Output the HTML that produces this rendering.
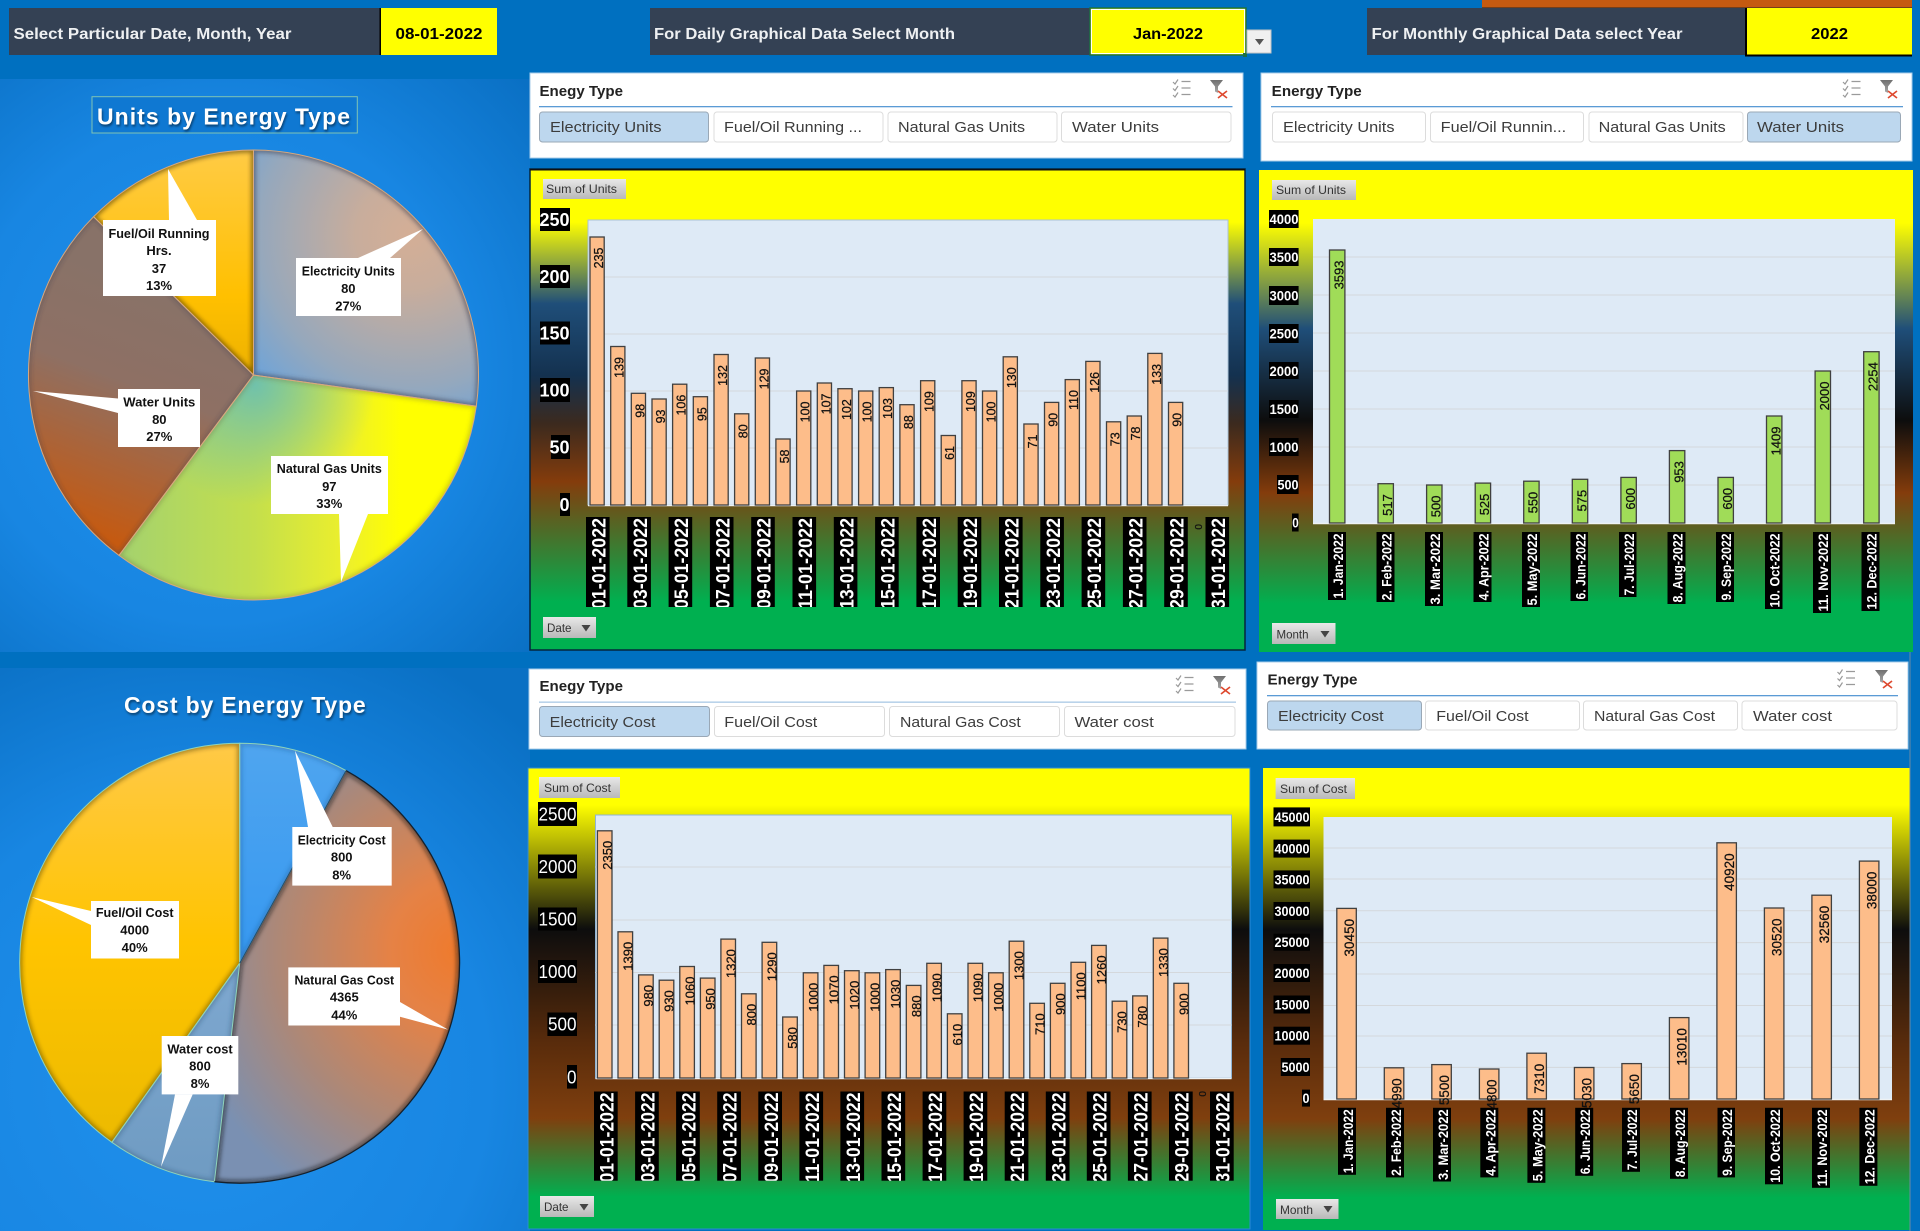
<!DOCTYPE html>
<html lang="en">
<head>
<meta charset="utf-8">
<title>Energy Dashboard</title>
<style>
html,body{margin:0;padding:0;background:#0070c0;width:1920px;height:1231px;overflow:hidden}
svg{display:block;font-family:"Liberation Sans",sans-serif}
.hd{font-size:15.5px;font-weight:bold;fill:#eef0f2}
.hy{font-size:16px;font-weight:bold;fill:#000;text-anchor:middle}
.st{font-size:15px;font-weight:bold;fill:#222}
.sb{font-size:15px;fill:#3c3c3c}
.pl{font-size:13px;font-weight:bold;fill:#111;text-anchor:middle}
.tt{font-size:23px;font-weight:bold;fill:#fff;filter:drop-shadow(1px 2px 1px rgba(0,0,0,.45))}
.b{stroke:#404040;stroke-width:1.3}
.o{fill:#fdbd8a}
.g{fill:#a0dc58}
.v{font-size:12.5px;fill:#111;stroke:#111;stroke-width:.25;text-anchor:end}
.w{font-size:13px;fill:#111;stroke:#111;stroke-width:.25;text-anchor:end}
.w2{font-size:13.5px;fill:#111;stroke:#111;stroke-width:.25;text-anchor:end}
.xd{font-size:19px;font-weight:bold;fill:#fff;text-anchor:end}
.xm{font-size:14px;font-weight:bold;fill:#fff;text-anchor:end}
.y1{font-size:18px;font-weight:bold;fill:#fff;text-anchor:end}
.y3{font-size:18px;fill:#fff;text-anchor:end}
.y2{font-size:14px;font-weight:bold;fill:#fff;text-anchor:end}
.bt{font-size:12px;fill:#333}
.gl{stroke:#d4d8dc;stroke-width:1}
</style>
</head>
<body>
<svg xmlns="http://www.w3.org/2000/svg" width="1920" height="1231" viewBox="0 0 1920 1231">
<defs>
<radialGradient id="pn1" gradientUnits="userSpaceOnUse" cx="220" cy="370" r="420"><stop offset="0" stop-color="#2090ec"/><stop offset=".6" stop-color="#1886e2"/><stop offset="1" stop-color="#0a70c4"/></radialGradient>
<radialGradient id="pn2" gradientUnits="userSpaceOnUse" cx="200" cy="1080" r="480"><stop offset="0" stop-color="#2090ec"/><stop offset=".6" stop-color="#1886e2"/><stop offset="1" stop-color="#0a70c4"/></radialGradient>
<linearGradient id="c1" x1="0" y1="0" x2="0" y2="1"><stop offset="0" stop-color="#ff0"/><stop offset=".11" stop-color="#ff0"/><stop offset=".28" stop-color="#1f4e79"/><stop offset=".43" stop-color="#14314f"/><stop offset=".53" stop-color="#3c2a1e"/><stop offset=".65" stop-color="#843c0c"/><stop offset=".9" stop-color="#00b050"/><stop offset="1" stop-color="#00b050"/></linearGradient>
<linearGradient id="c2" x1="0" y1="0" x2="0" y2="1"><stop offset="0" stop-color="#ff0"/><stop offset=".11" stop-color="#ff0"/><stop offset=".33" stop-color="#1f4e79"/><stop offset=".52" stop-color="#0d0d0d"/><stop offset=".67" stop-color="#843c0c"/><stop offset=".9" stop-color="#00b050"/><stop offset="1" stop-color="#00b050"/></linearGradient>
<linearGradient id="c3" x1="0" y1="0" x2="0" y2="1"><stop offset="0" stop-color="#ff0"/><stop offset=".08" stop-color="#ff0"/><stop offset=".35" stop-color="#0d0d0d"/><stop offset=".6" stop-color="#5a2c0c"/><stop offset=".76" stop-color="#7f3f0e"/><stop offset=".93" stop-color="#00b050"/><stop offset="1" stop-color="#00b050"/></linearGradient>
<linearGradient id="btn" x1="0" y1="0" x2="0" y2="1"><stop offset="0" stop-color="#e8e8e8"/><stop offset="1" stop-color="#b8b8b8"/></linearGradient>
<linearGradient id="fun" x1="0" y1="0" x2="0" y2="1"><stop offset="0" stop-color="#707070"/><stop offset="1" stop-color="#a8a8a8"/></linearGradient>

<path id="a1" d="M253.5 375L253.5 150A225 225 0 0 1 476.3 406.2Z"/>
<path id="a2" d="M253.5 375L476.3 406.2A225 225 0 0 1 119 555.4Z"/>
<path id="a3" d="M253.5 375L119 555.4A225 225 0 0 1 93.6 216.7Z"/>
<path id="a4" d="M253.5 375L93.6 216.7A225 225 0 0 1 253.5 150Z"/>
<path id="b1" d="M239.7 963.2L239.7 743.2A220 220 0 0 1 346 770.6Z"/>
<path id="b2" d="M239.7 963.2L346 770.6A220 220 0 0 1 214.4 1181.7Z"/>
<path id="b3" d="M239.7 963.2L214.4 1181.7A220 220 0 0 1 111.9 1142.3Z"/>
<path id="b4" d="M239.7 963.2L111.9 1142.3A220 220 0 0 1 239.7 743.2Z"/>
<clipPath id="ca1"><use href="#a1"/></clipPath>
<clipPath id="ca2"><use href="#a2"/></clipPath>
<clipPath id="ca3"><use href="#a3"/></clipPath>
<clipPath id="ca4"><use href="#a4"/></clipPath>
<clipPath id="cb1"><use href="#b1"/></clipPath>
<clipPath id="cb2"><use href="#b2"/></clipPath>
<clipPath id="cb3"><use href="#b3"/></clipPath>
<clipPath id="cb4"><use href="#b4"/></clipPath>
<filter id="bl" x="-20%" y="-20%" width="140%" height="140%"><feGaussianBlur stdDeviation="2"/></filter>

<radialGradient id="fa1" gradientUnits="userSpaceOnUse" cx="410" cy="235" r="215"><stop offset="0" stop-color="#d4ae96"/><stop offset=".25" stop-color="#c8ad9c"/><stop offset=".7" stop-color="#96a8bc"/><stop offset="1" stop-color="#69a3dc"/></radialGradient>
<linearGradient id="fa2" gradientUnits="userSpaceOnUse" x1="120" y1="0" x2="400" y2="0"><stop offset="0" stop-color="#a4d26e"/><stop offset=".48" stop-color="#c4df4c"/><stop offset=".82" stop-color="#eef02a"/><stop offset="1" stop-color="#ff0"/></linearGradient>
<radialGradient id="fa2b" gradientUnits="userSpaceOnUse" cx="255" cy="385" r="120"><stop offset="0" stop-color="#6cc0b0" stop-opacity=".95"/><stop offset="1" stop-color="#6cc0b0" stop-opacity="0"/></radialGradient>
<linearGradient id="fa3" gradientUnits="userSpaceOnUse" x1="200" y1="300" x2="110" y2="540"><stop offset="0" stop-color="#887268"/><stop offset=".4" stop-color="#8e7064"/><stop offset=".7" stop-color="#aa643a"/><stop offset="1" stop-color="#c55a11"/></linearGradient>
<linearGradient id="fa4" gradientUnits="userSpaceOnUse" x1="0" y1="150" x2="0" y2="375"><stop offset="0" stop-color="#ffcb45"/><stop offset=".65" stop-color="#ffc000"/><stop offset="1" stop-color="#edb100"/></linearGradient>
<linearGradient id="fb1" gradientUnits="userSpaceOnUse" x1="0" y1="743" x2="0" y2="963"><stop offset="0" stop-color="#4fa5ef"/><stop offset="1" stop-color="#3698f0"/></linearGradient>
<radialGradient id="fb2" gradientUnits="userSpaceOnUse" cx="460" cy="950" r="285"><stop offset="0" stop-color="#ef7a2c"/><stop offset=".25" stop-color="#e58246"/><stop offset=".65" stop-color="#ac8878"/><stop offset="1" stop-color="#7a90b2"/></radialGradient>
<linearGradient id="fb3" gradientUnits="userSpaceOnUse" x1="0" y1="963" x2="0" y2="1180"><stop offset="0" stop-color="#7ea8d0"/><stop offset="1" stop-color="#6f9bc2"/></linearGradient>
<linearGradient id="fb4" gradientUnits="userSpaceOnUse" x1="0" y1="743" x2="0" y2="1142"><stop offset="0" stop-color="#ffc947"/><stop offset=".5" stop-color="#ffc400"/><stop offset="1" stop-color="#ecba00"/></linearGradient>

<g id="ms" fill="none" stroke="#9a9a9a" stroke-width="1.2"><path d="M0 3l2 2 3-4.500M0 9.500l2 2 3-4.500M0 16l2 2 3-4.500"/><path d="M8.500 2.500h9M8.500 9h9M8.500 15.500h9"/></g>
<g id="fx"><path d="M0 0h13L8 6.500V13L5 11.500V6.500z" fill="url(#fun)"/><path d="M8 11l9 7M17 11l-9 7" stroke="#de4a30" stroke-width="1.700" fill="none"/></g>
<clipPath id="xc1"><rect x="570" y="517" width="680" height="90"/></clipPath>
<clipPath id="xc3"><rect x="570" y="1091.5" width="680" height="89.2"/></clipPath>
</defs>

<rect width="1920" height="1231" fill="#0070c0"/>
<!-- panels -->
<rect x="0" y="79" width="530" height="573" fill="url(#pn1)"/>
<rect x="0" y="668" width="530" height="563" fill="url(#pn2)"/>

<!-- header -->
<rect x="1482" y="0" width="430" height="8" fill="#c55a11"/>
<rect x="1482" y="7.5" width="430" height="1" fill="#222"/>
<rect x="9" y="8" width="371" height="47" fill="#344154"/>
<rect x="380" y="8" width="117" height="47" fill="#ff0"/>
<rect x="379.5" y="8" width="1.5" height="47" fill="#000"/>
<text class="hd" x="13.5" y="39" textLength="278" lengthAdjust="spacingAndGlyphs">Select Particular Date, Month, Year</text>
<text class="hy" x="439" y="39" textLength="87" lengthAdjust="spacingAndGlyphs">08-01-2022</text>
<rect x="650" y="8" width="440" height="47" fill="#344154"/>
<rect x="1090" y="8" width="156" height="47" fill="#ff0" stroke="#1d7044" stroke-width="1.5"/>
<rect x="1091.5" y="9.5" width="153" height="44" fill="#ff0" stroke="#fff" stroke-width="1"/>
<rect x="1243" y="53" width="4" height="4" fill="#1d7044"/>
<text class="hd" x="654" y="39" textLength="301" lengthAdjust="spacingAndGlyphs">For Daily Graphical Data Select Month</text>
<text class="hy" x="1168" y="39" textLength="70" lengthAdjust="spacingAndGlyphs">Jan-2022</text>
<rect x="1247" y="30" width="24" height="23" fill="#f0f0f0" stroke="#c4c4c4" stroke-width="1"/>
<path d="M1255 39h9l-4.500 6z" fill="#555"/>
<rect x="1367" y="8" width="379" height="47" fill="#344154"/>
<rect x="1746" y="8" width="166" height="47" fill="#ff0"/>
<path d="M1746 8v47.500h166" stroke="#000" stroke-width="2" fill="none"/>
<text class="hd" x="1371.5" y="39" textLength="311" lengthAdjust="spacingAndGlyphs">For Monthly Graphical Data select Year</text>
<text class="hy" x="1829.500" y="39" textLength="37" lengthAdjust="spacingAndGlyphs">2022</text>

<!-- pie 1 -->
<rect x="92" y="96.7" width="265.300" height="36.300" fill="#0f78d2" stroke="#7fc4b4" stroke-width="1"/>
<text class="tt" x="97" y="124.5" textLength="253" lengthAdjust="spacing">Units by Energy Type</text>
<use href="#a1" fill="url(#fa1)"/>
<g clip-path="url(#ca1)"><use href="#a1" fill="none" stroke="#3a3a4a" stroke-opacity=".55" stroke-width="5" filter="url(#bl)"/></g>
<use href="#a2" fill="url(#fa2)"/><use href="#a2" fill="url(#fa2b)"/>
<g clip-path="url(#ca2)"><use href="#a2" fill="none" stroke="#66663a" stroke-opacity=".3" stroke-width="5" filter="url(#bl)"/></g>
<use href="#a3" fill="url(#fa3)"/>
<g clip-path="url(#ca3)"><use href="#a3" fill="none" stroke="#3a3a4a" stroke-opacity=".3" stroke-width="5" filter="url(#bl)"/></g>
<use href="#a4" fill="url(#fa4)"/>
<g clip-path="url(#ca4)"><use href="#a4" fill="none" stroke="#3a2a00" stroke-opacity=".55" stroke-width="5" filter="url(#bl)"/></g>
<g fill="none" stroke="#d8a87e" stroke-width="1"><use href="#a1"/><use href="#a2"/><use href="#a3"/><use href="#a4"/></g>

<g fill="#fff">
<path d="M168 169L169 220H197Z"/><rect x="103" y="220" width="113" height="76"/>
<path d="M423 229L358 258H390Z"/><rect x="296" y="258" width="105" height="58"/>
<path d="M33 391L118 398.500V413Z"/><rect x="118" y="389" width="82" height="58"/>
<path d="M341 582L339 514H368Z"/><rect x="271" y="456" width="117" height="58"/>
</g>
<text class="pl" x="159" y="238" textLength="101" lengthAdjust="spacingAndGlyphs">Fuel/Oil Running</text>
<text class="pl" x="159" y="255">Hrs.</text><text class="pl" x="159" y="273">37</text><text class="pl" x="159" y="290">13%</text>
<text class="pl" x="348.3" y="275.500" textLength="93" lengthAdjust="spacingAndGlyphs">Electricity Units</text>
<text class="pl" x="348.3" y="293">80</text><text class="pl" x="348.3" y="310.500">27%</text>
<text class="pl" x="159.3" y="406.5" textLength="72" lengthAdjust="spacingAndGlyphs">Water Units</text>
<text class="pl" x="159.3" y="424">80</text><text class="pl" x="159.3" y="441">27%</text>
<text class="pl" x="329.3" y="473" textLength="105" lengthAdjust="spacingAndGlyphs">Natural Gas Units</text>
<text class="pl" x="329.3" y="491">97</text><text class="pl" x="329.3" y="508">33%</text>

<!-- pie 2 -->
<text class="tt" x="124" y="713" textLength="241.700" lengthAdjust="spacing">Cost by Energy Type</text>
<use href="#b1" fill="url(#fb1)"/>
<g clip-path="url(#cb1)"><use href="#b1" fill="none" stroke="#1a4a80" stroke-opacity=".3" stroke-width="5" filter="url(#bl)"/></g>
<use href="#b2" fill="url(#fb2)"/>
<g clip-path="url(#cb2)"><use href="#b2" fill="none" stroke="#1a1a1a" stroke-opacity=".55" stroke-width="6" filter="url(#bl)"/></g>
<use href="#b3" fill="url(#fb3)"/>
<g clip-path="url(#cb3)"><use href="#b3" fill="none" stroke="#2a4a6a" stroke-opacity=".35" stroke-width="5" filter="url(#bl)"/></g>
<use href="#b4" fill="url(#fb4)"/>
<g clip-path="url(#cb4)"><use href="#b4" fill="none" stroke="#3a2a00" stroke-opacity=".45" stroke-width="5" filter="url(#bl)"/></g>
<g fill="none" stroke="#8fd4ba" stroke-width="1"><use href="#b1"/><use href="#b3"/><use href="#b4"/></g>
<path d="M346 770.600A220 220 0 0 1 214.400 1181.700" fill="none" stroke="#14202c" stroke-width="1.300"/>
<path d="M346 770.600L239.700 963.200" fill="none" stroke="#1c4a70" stroke-width="1"/>

<g fill="#fff">
<path d="M295 750.700L308 827H332.700Z"/><rect x="292.300" y="827" width="99.400" height="58.600"/>
<path d="M31.700 897L91 911V925Z"/><rect x="91" y="901" width="88" height="57.500"/>
<path d="M448 1029.600L400 1002V1016.700Z"/><rect x="288.300" y="967.400" width="111.700" height="58.100"/>
<path d="M161 1166.700L175 1094.400H192.700Z"/><rect x="161.700" y="1036" width="76.600" height="58.400"/>
</g>
<text class="pl" x="341.700" y="844.500" textLength="88" lengthAdjust="spacingAndGlyphs">Electricity Cost</text>
<text class="pl" x="341.700" y="861.500">800</text><text class="pl" x="341.700" y="879.500">8%</text>
<text class="pl" x="134.700" y="917" textLength="77.700" lengthAdjust="spacingAndGlyphs">Fuel/Oil Cost</text>
<text class="pl" x="134.700" y="934.500">4000</text><text class="pl" x="134.700" y="952">40%</text>
<text class="pl" x="344.300" y="984.500" textLength="99.700" lengthAdjust="spacingAndGlyphs">Natural Gas Cost</text>
<text class="pl" x="344.300" y="1001.500">4365</text><text class="pl" x="344.300" y="1019.500">44%</text>
<text class="pl" x="200" y="1053.500" textLength="65.300" lengthAdjust="spacingAndGlyphs">Water cost</text>
<text class="pl" x="200" y="1070.500">800</text><text class="pl" x="200" y="1088">8%</text>

<!-- slicer 1 -->
<rect x="530" y="73" width="713" height="85" fill="#fff" stroke="#a9cdea" stroke-width="1"/>
<text class="st" x="539.5" y="96" textLength="83.500" lengthAdjust="spacingAndGlyphs">Enegy Type</text>
<rect x="539" y="106" width="693.500" height="1.300" fill="#5b9bd5"/>
<use href="#ms" x="1173" y="79"/><use href="#fx" x="1210" y="80"/>
<rect x="539.500" y="112" width="169" height="30" rx="3" fill="#bdd7ee" stroke="#9aa8b6"/>
<rect x="714" y="112" width="169" height="30" rx="3" fill="#fff" stroke="#dcdcdc"/>
<rect x="888" y="112" width="169" height="30" rx="3" fill="#fff" stroke="#dcdcdc"/>
<rect x="1061.500" y="112" width="169.500" height="30" rx="3" fill="#fff" stroke="#dcdcdc"/>
<text class="sb" x="550" y="132" textLength="111.500" lengthAdjust="spacingAndGlyphs">Electricity Units</text>
<text class="sb" x="724" y="132" textLength="138" lengthAdjust="spacingAndGlyphs">Fuel/Oil Running ...</text>
<text class="sb" x="898" y="132" textLength="127" lengthAdjust="spacingAndGlyphs">Natural Gas Units</text>
<text class="sb" x="1072" y="132" textLength="87" lengthAdjust="spacingAndGlyphs">Water Units</text>

<!-- slicer 2 -->
<rect x="1261" y="73" width="651" height="88" fill="#fff" stroke="#a9cdea" stroke-width="1"/>
<text class="st" x="1271.700" y="96" textLength="90" lengthAdjust="spacingAndGlyphs">Energy Type</text>
<rect x="1271" y="106" width="632" height="1.300" fill="#5b9bd5"/>
<use href="#ms" x="1843" y="79"/><use href="#fx" x="1880" y="80"/>
<rect x="1272.500" y="112" width="153" height="30" rx="3" fill="#fff" stroke="#dcdcdc"/>
<rect x="1430.500" y="112" width="153" height="30" rx="3" fill="#fff" stroke="#dcdcdc"/>
<rect x="1589" y="112" width="154" height="30" rx="3" fill="#fff" stroke="#dcdcdc"/>
<rect x="1747.500" y="112" width="153" height="30" rx="3" fill="#bdd7ee" stroke="#9aa8b6"/>
<text class="sb" x="1283" y="132" textLength="111.500" lengthAdjust="spacingAndGlyphs">Electricity Units</text>
<text class="sb" x="1440.700" y="132" textLength="125.500" lengthAdjust="spacingAndGlyphs">Fuel/Oil Runnin...</text>
<text class="sb" x="1598.700" y="132" textLength="127" lengthAdjust="spacingAndGlyphs">Natural Gas Units</text>
<text class="sb" x="1757" y="132" textLength="87" lengthAdjust="spacingAndGlyphs">Water Units</text>

<!-- slicer 3 -->
<rect x="529" y="669" width="717" height="80" fill="#fff" stroke="#a9cdea" stroke-width="1"/>
<text class="st" x="539.500" y="691" textLength="83.500" lengthAdjust="spacingAndGlyphs">Enegy Type</text>
<rect x="539" y="701.500" width="697" height="1.300" fill="#a9c8e4"/>
<use href="#ms" x="1176" y="675"/><use href="#fx" x="1213" y="676"/>
<rect x="539.500" y="706.500" width="170" height="30" rx="3" fill="#bdd7ee" stroke="#9aa8b6"/>
<rect x="714.500" y="706.500" width="170" height="30" rx="3" fill="#fff" stroke="#dcdcdc"/>
<rect x="889.500" y="706.500" width="170" height="30" rx="3" fill="#fff" stroke="#dcdcdc"/>
<rect x="1064.500" y="706.500" width="170.500" height="30" rx="3" fill="#fff" stroke="#dcdcdc"/>
<text class="sb" x="549.700" y="727" textLength="105.700" lengthAdjust="spacingAndGlyphs">Electricity Cost</text>
<text class="sb" x="724.300" y="727" textLength="93" lengthAdjust="spacingAndGlyphs">Fuel/Oil Cost</text>
<text class="sb" x="900" y="727" textLength="120.800" lengthAdjust="spacingAndGlyphs">Natural Gas Cost</text>
<text class="sb" x="1074.500" y="727" textLength="79.300" lengthAdjust="spacingAndGlyphs">Water cost</text>

<!-- slicer 4 -->
<rect x="1257" y="662" width="651" height="87" fill="#fff" stroke="#a9cdea" stroke-width="1"/>
<text class="st" x="1267.500" y="684.500" textLength="90" lengthAdjust="spacingAndGlyphs">Energy Type</text>
<rect x="1267" y="695" width="631" height="1.300" fill="#5b9bd5"/>
<use href="#ms" x="1837.500" y="669"/><use href="#fx" x="1875" y="670"/>
<rect x="1267.500" y="701" width="154" height="29" rx="3" fill="#bdd7ee" stroke="#9aa8b6"/>
<rect x="1425.500" y="701" width="154" height="29" rx="3" fill="#fff" stroke="#dcdcdc"/>
<rect x="1583.500" y="701" width="154" height="29" rx="3" fill="#fff" stroke="#dcdcdc"/>
<rect x="1742" y="701" width="155" height="29" rx="3" fill="#fff" stroke="#dcdcdc"/>
<text class="sb" x="1278" y="721" textLength="105.600" lengthAdjust="spacingAndGlyphs">Electricity Cost</text>
<text class="sb" x="1436.300" y="721" textLength="92.300" lengthAdjust="spacingAndGlyphs">Fuel/Oil Cost</text>
<text class="sb" x="1594" y="721" textLength="121" lengthAdjust="spacingAndGlyphs">Natural Gas Cost</text>
<text class="sb" x="1753" y="721" textLength="79" lengthAdjust="spacingAndGlyphs">Water cost</text>

<!-- chart 1 -->
<rect x="530" y="169" width="715" height="481" fill="url(#c1)" stroke="#04253c" stroke-width="1.500"/>
<rect x="530" y="169" width="715" height="1.500" fill="#111"/>
<rect x="543" y="179" width="83" height="20" fill="url(#btn)"/>
<text class="bt" x="546" y="193" textLength="71" lengthAdjust="spacingAndGlyphs">Sum of Units</text>
<rect x="588" y="220" width="640" height="285" fill="#deeaf6" stroke="#a9c2d6" stroke-width="1"/>
<path class="gl" d="M588 277h640M588 334h640M588 391h640M588 448h640"/>
<path d="M588 505.500h640" stroke="#eef2f4" stroke-width="1.500"/>
<g class="b o">
<rect x="590" y="237" width="14.200" height="268"/><rect x="610.700" y="346.500" width="14.200" height="158.500"/><rect x="631.300" y="393.300" width="14.200" height="111.700"/><rect x="652" y="399" width="14.200" height="106"/><rect x="672.600" y="384.200" width="14.200" height="120.800"/><rect x="693.300" y="396.700" width="14.200" height="108.300"/><rect x="714" y="354.500" width="14.200" height="150.500"/><rect x="734.600" y="413.800" width="14.200" height="91.200"/><rect x="755.300" y="358" width="14.200" height="147"/><rect x="775.900" y="439" width="14.200" height="66"/><rect x="796.600" y="391" width="14.200" height="114"/><rect x="817.300" y="383" width="14.200" height="122"/><rect x="837.900" y="388.700" width="14.200" height="116.300"/><rect x="858.600" y="391" width="14.200" height="114"/><rect x="879.200" y="387.600" width="14.200" height="117.400"/><rect x="899.900" y="404.700" width="14.200" height="100.300"/><rect x="920.600" y="380.700" width="14.200" height="124.300"/><rect x="941.200" y="435.500" width="14.200" height="69.500"/><rect x="961.900" y="380.700" width="14.200" height="124.300"/><rect x="982.500" y="391" width="14.200" height="114"/><rect x="1003.200" y="356.800" width="14.200" height="148.200"/><rect x="1023.900" y="424" width="14.200" height="81"/><rect x="1044.500" y="402.400" width="14.200" height="102.600"/><rect x="1065.200" y="379.600" width="14.200" height="125.400"/><rect x="1085.800" y="361.400" width="14.200" height="143.600"/><rect x="1106.500" y="421.800" width="14.200" height="83.200"/><rect x="1127.200" y="416" width="14.200" height="89"/><rect x="1147.800" y="353.400" width="14.200" height="151.600"/><rect x="1168.500" y="402.400" width="14.200" height="102.600"/>
</g>
<g>
<text class="v" transform="translate(603,247.500) rotate(-90)">235</text><text class="v" transform="translate(623.700,357) rotate(-90)">139</text><text class="v" transform="translate(644.300,403.800) rotate(-90)">98</text><text class="v" transform="translate(665,409.500) rotate(-90)">93</text><text class="v" transform="translate(685.600,394.700) rotate(-90)">106</text><text class="v" transform="translate(706.300,407.200) rotate(-90)">95</text><text class="v" transform="translate(727,365) rotate(-90)">132</text><text class="v" transform="translate(747.600,424.300) rotate(-90)">80</text><text class="v" transform="translate(768.300,368.500) rotate(-90)">129</text><text class="v" transform="translate(788.900,449.500) rotate(-90)">58</text><text class="v" transform="translate(809.600,401.500) rotate(-90)">100</text><text class="v" transform="translate(830.300,393.500) rotate(-90)">107</text><text class="v" transform="translate(850.900,399.200) rotate(-90)">102</text><text class="v" transform="translate(871.600,401.500) rotate(-90)">100</text><text class="v" transform="translate(892.200,398.100) rotate(-90)">103</text><text class="v" transform="translate(912.900,415.200) rotate(-90)">88</text><text class="v" transform="translate(933.600,391.200) rotate(-90)">109</text><text class="v" transform="translate(954.200,446) rotate(-90)">61</text><text class="v" transform="translate(974.900,391.200) rotate(-90)">109</text><text class="v" transform="translate(995.500,401.500) rotate(-90)">100</text><text class="v" transform="translate(1016.200,367.300) rotate(-90)">130</text><text class="v" transform="translate(1036.900,434.500) rotate(-90)">71</text><text class="v" transform="translate(1057.500,412.900) rotate(-90)">90</text><text class="v" transform="translate(1078.200,390.100) rotate(-90)">110</text><text class="v" transform="translate(1098.800,371.900) rotate(-90)">126</text><text class="v" transform="translate(1119.500,432.300) rotate(-90)">73</text><text class="v" transform="translate(1140.200,426.500) rotate(-90)">78</text><text class="v" transform="translate(1160.800,363.900) rotate(-90)">133</text><text class="v" transform="translate(1181.500,412.900) rotate(-90)">90</text>
<text class="v" style="font-size:10px" transform="translate(1202,524) rotate(-90)">0</text>
<text class="v" style="font-size:10px" transform="translate(1222.500,519) rotate(-90)">0</text>
</g>
<!-- y labels 1 -->
<g fill="#000"><rect x="540" y="208" width="30" height="23"/><rect x="540" y="265" width="30" height="23"/><rect x="540" y="321.500" width="30" height="23"/><rect x="540" y="378" width="30" height="24"/><rect x="551" y="435" width="19" height="24"/><rect x="560" y="493" width="10" height="23"/></g>
<text class="y1" x="569.500" y="226">250</text><text class="y1" x="569.500" y="283">200</text><text class="y1" x="569.500" y="339.500">150</text><text class="y1" x="569.500" y="396.500">100</text><text class="y1" x="569.500" y="453.500">50</text><text class="y1" x="569.500" y="511">0</text>
<!-- x labels 1 -->
<g fill="#000"><rect x="586" y="517" width="23.600" height="90"/><rect x="627.300" y="517" width="23.600" height="90"/><rect x="668.600" y="517" width="23.600" height="90"/><rect x="709.900" y="517" width="23.600" height="90"/><rect x="751.200" y="517" width="23.600" height="90"/><rect x="792.500" y="517" width="23.600" height="90"/><rect x="833.800" y="517" width="23.600" height="90"/><rect x="875.100" y="517" width="23.600" height="90"/><rect x="916.400" y="517" width="23.600" height="90"/><rect x="957.700" y="517" width="23.600" height="90"/><rect x="999" y="517" width="23.600" height="90"/><rect x="1040.300" y="517" width="23.600" height="90"/><rect x="1081.600" y="517" width="23.600" height="90"/><rect x="1122.900" y="517" width="23.600" height="90"/><rect x="1164.200" y="517" width="23.600" height="90"/><rect x="1205.500" y="517" width="23.600" height="90"/></g>
<g clip-path="url(#xc1)">
<text class="xd" transform="translate(605.500,518) rotate(-90)" textLength="91" lengthAdjust="spacingAndGlyphs">01-01-2022</text>
<text class="xd" transform="translate(646.800,518) rotate(-90)" textLength="91" lengthAdjust="spacingAndGlyphs">03-01-2022</text>
<text class="xd" transform="translate(688.100,518) rotate(-90)" textLength="91" lengthAdjust="spacingAndGlyphs">05-01-2022</text>
<text class="xd" transform="translate(729.400,518) rotate(-90)" textLength="91" lengthAdjust="spacingAndGlyphs">07-01-2022</text>
<text class="xd" transform="translate(770.700,518) rotate(-90)" textLength="91" lengthAdjust="spacingAndGlyphs">09-01-2022</text>
<text class="xd" transform="translate(812,518) rotate(-90)" textLength="91" lengthAdjust="spacingAndGlyphs">11-01-2022</text>
<text class="xd" transform="translate(853.300,518) rotate(-90)" textLength="91" lengthAdjust="spacingAndGlyphs">13-01-2022</text>
<text class="xd" transform="translate(894.600,518) rotate(-90)" textLength="91" lengthAdjust="spacingAndGlyphs">15-01-2022</text>
<text class="xd" transform="translate(935.900,518) rotate(-90)" textLength="91" lengthAdjust="spacingAndGlyphs">17-01-2022</text>
<text class="xd" transform="translate(977.200,518) rotate(-90)" textLength="91" lengthAdjust="spacingAndGlyphs">19-01-2022</text>
<text class="xd" transform="translate(1018.500,518) rotate(-90)" textLength="91" lengthAdjust="spacingAndGlyphs">21-01-2022</text>
<text class="xd" transform="translate(1059.800,518) rotate(-90)" textLength="91" lengthAdjust="spacingAndGlyphs">23-01-2022</text>
<text class="xd" transform="translate(1101.100,518) rotate(-90)" textLength="91" lengthAdjust="spacingAndGlyphs">25-01-2022</text>
<text class="xd" transform="translate(1142.400,518) rotate(-90)" textLength="91" lengthAdjust="spacingAndGlyphs">27-01-2022</text>
<text class="xd" transform="translate(1183.700,518) rotate(-90)" textLength="91" lengthAdjust="spacingAndGlyphs">29-01-2022</text>
<text class="xd" transform="translate(1225,518) rotate(-90)" textLength="91" lengthAdjust="spacingAndGlyphs">31-01-2022</text>
</g>
<rect x="543" y="617" width="53" height="21" fill="url(#btn)"/>
<text class="bt" x="547" y="632" textLength="24.500" lengthAdjust="spacingAndGlyphs">Date</text>
<path d="M581.500 625h9l-4.500 6.500z" fill="#444"/>

<!-- chart 2 -->
<rect x="1259" y="170" width="654" height="482" fill="url(#c2)"/>
<rect x="1272" y="180" width="84" height="20" fill="url(#btn)"/>
<text class="bt" x="1276" y="194" textLength="70" lengthAdjust="spacingAndGlyphs">Sum of Units</text>
<rect x="1313" y="219" width="582" height="304" fill="#deeaf6"/>
<path class="gl" d="M1313 257h582M1313 295h582M1313 333h582M1313 371h582M1313 409h582M1313 447h582M1313 485h582"/>
<path d="M1313 523.500h582" stroke="#eef2f4" stroke-width="1.500"/>
<g class="b g">
<rect x="1329.500" y="250" width="15.400" height="273"/><rect x="1378" y="483.700" width="15.400" height="39.300"/><rect x="1426.600" y="485" width="15.400" height="38"/><rect x="1475.200" y="483.100" width="15.400" height="39.900"/><rect x="1523.700" y="481.200" width="15.400" height="41.800"/><rect x="1572.300" y="479.300" width="15.400" height="43.700"/><rect x="1620.900" y="477.400" width="15.400" height="45.600"/><rect x="1669.400" y="450.600" width="15.400" height="72.400"/><rect x="1718" y="477.400" width="15.400" height="45.600"/><rect x="1766.500" y="416" width="15.400" height="107"/><rect x="1815.100" y="371" width="15.400" height="152"/><rect x="1863.700" y="351.700" width="15.400" height="171.300"/>
</g>
<text class="w" transform="translate(1343.500,260.500) rotate(-90)">3593</text>
<text class="w" transform="translate(1392,494.200) rotate(-90)">517</text>
<text class="w" transform="translate(1440.600,495.500) rotate(-90)">500</text>
<text class="w" transform="translate(1489.200,493.600) rotate(-90)">525</text>
<text class="w" transform="translate(1537.700,491.700) rotate(-90)">550</text>
<text class="w" transform="translate(1586.300,489.800) rotate(-90)">575</text>
<text class="w" transform="translate(1634.900,487.900) rotate(-90)">600</text>
<text class="w" transform="translate(1683.400,461.100) rotate(-90)">953</text>
<text class="w" transform="translate(1732,487.900) rotate(-90)">600</text>
<text class="w" transform="translate(1780.500,426.500) rotate(-90)">1409</text>
<text class="w" transform="translate(1829.100,381.500) rotate(-90)">2000</text>
<text class="w" transform="translate(1877.700,362.200) rotate(-90)">2254</text>
<g fill="#000"><rect x="1269" y="210" width="29.600" height="18"/><rect x="1269" y="248" width="29.600" height="18"/><rect x="1269" y="286" width="29.600" height="19"/><rect x="1269" y="324" width="29.600" height="19"/><rect x="1269" y="362" width="29.600" height="17"/><rect x="1269" y="400" width="29.600" height="18"/><rect x="1269" y="438" width="29.600" height="18"/><rect x="1277" y="475" width="21.600" height="19"/><rect x="1292" y="513.500" width="6.600" height="18"/></g>
<text class="y2" x="1298.500" y="224" textLength="29" lengthAdjust="spacingAndGlyphs">4000</text>
<text class="y2" x="1298.500" y="262" textLength="29" lengthAdjust="spacingAndGlyphs">3500</text>
<text class="y2" x="1298.500" y="300.500" textLength="29" lengthAdjust="spacingAndGlyphs">3000</text>
<text class="y2" x="1298.500" y="338.500" textLength="29" lengthAdjust="spacingAndGlyphs">2500</text>
<text class="y2" x="1298.500" y="376" textLength="29" lengthAdjust="spacingAndGlyphs">2000</text>
<text class="y2" x="1298.500" y="414" textLength="29" lengthAdjust="spacingAndGlyphs">1500</text>
<text class="y2" x="1298.500" y="452" textLength="29" lengthAdjust="spacingAndGlyphs">1000</text>
<text class="y2" x="1298.500" y="489.500" textLength="21" lengthAdjust="spacingAndGlyphs">500</text>
<text class="y2" x="1298.800" y="527.500" textLength="6.500" lengthAdjust="spacingAndGlyphs">0</text>
<g fill="#000"><rect x="1328" y="532" width="18" height="68"/><rect x="1376.500" y="532" width="18" height="70"/><rect x="1425" y="532" width="18" height="74"/><rect x="1473.500" y="532" width="18" height="70"/><rect x="1522" y="532" width="18" height="75"/><rect x="1570.500" y="532" width="17.500" height="69"/><rect x="1619" y="532" width="17.500" height="65"/><rect x="1667.500" y="532" width="18" height="72"/><rect x="1716" y="532" width="18" height="70"/><rect x="1765" y="532" width="17.500" height="77"/><rect x="1813" y="532" width="18" height="81"/><rect x="1861.500" y="532" width="18" height="79"/></g>
<text class="xm" transform="translate(1343,533.500) rotate(-90)" textLength="65" lengthAdjust="spacingAndGlyphs">1. Jan-2022</text>
<text class="xm" transform="translate(1391.500,533.500) rotate(-90)" textLength="67" lengthAdjust="spacingAndGlyphs">2. Feb-2022</text>
<text class="xm" transform="translate(1440,533.500) rotate(-90)" textLength="71" lengthAdjust="spacingAndGlyphs">3. Mar-2022</text>
<text class="xm" transform="translate(1488.500,533.500) rotate(-90)" textLength="67" lengthAdjust="spacingAndGlyphs">4. Apr-2022</text>
<text class="xm" transform="translate(1537,533.500) rotate(-90)" textLength="72" lengthAdjust="spacingAndGlyphs">5. May-2022</text>
<text class="xm" transform="translate(1585.500,533.500) rotate(-90)" textLength="66" lengthAdjust="spacingAndGlyphs">6. Jun-2022</text>
<text class="xm" transform="translate(1634,533.500) rotate(-90)" textLength="62" lengthAdjust="spacingAndGlyphs">7. Jul-2022</text>
<text class="xm" transform="translate(1682.500,533.500) rotate(-90)" textLength="69" lengthAdjust="spacingAndGlyphs">8. Aug-2022</text>
<text class="xm" transform="translate(1731,533.500) rotate(-90)" textLength="67" lengthAdjust="spacingAndGlyphs">9. Sep-2022</text>
<text class="xm" transform="translate(1779.500,533.500) rotate(-90)" textLength="74" lengthAdjust="spacingAndGlyphs">10. Oct-2022</text>
<text class="xm" transform="translate(1828,533.500) rotate(-90)" textLength="78" lengthAdjust="spacingAndGlyphs">11. Nov-2022</text>
<text class="xm" transform="translate(1876.500,533.500) rotate(-90)" textLength="76" lengthAdjust="spacingAndGlyphs">12. Dec-2022</text>
<rect x="1272" y="623" width="63.500" height="21" fill="url(#btn)"/>
<text class="bt" x="1276.500" y="638.500" textLength="32" lengthAdjust="spacingAndGlyphs">Month</text>
<path d="M1320.500 631h9l-4.500 6.500z" fill="#444"/>

<!-- chart 3 -->
<rect x="528" y="768" width="722" height="461" fill="url(#c3)" stroke="#2a8ad8" stroke-width="1"/>
<rect x="539" y="777" width="81" height="21" fill="url(#btn)"/>
<text class="bt" x="544" y="792" textLength="67" lengthAdjust="spacingAndGlyphs">Sum of Cost</text>
<rect x="595.500" y="815" width="636" height="263" fill="#deeaf6" stroke="#8fb4d4" stroke-width="1"/>
<path class="gl" d="M595.500 867h636M595.500 920h636M595.500 972.500h636M595.500 1025h636"/>
<path d="M595.500 1078.500h636" stroke="#eef2f4" stroke-width="1.500"/>
<g class="b o">
<rect x="597.400" y="830.800" width="14.600" height="247.200"/><rect x="618" y="931.800" width="14.600" height="146.200"/><rect x="638.600" y="974.900" width="14.600" height="103.100"/><rect x="659.200" y="980.200" width="14.600" height="97.800"/><rect x="679.800" y="966.500" width="14.600" height="111.500"/><rect x="700.400" y="978.100" width="14.600" height="99.900"/><rect x="720.900" y="939.100" width="14.600" height="138.900"/><rect x="741.500" y="993.800" width="14.600" height="84.200"/><rect x="762.100" y="942.300" width="14.600" height="135.700"/><rect x="782.700" y="1017" width="14.600" height="61"/><rect x="803.300" y="972.800" width="14.600" height="105.200"/><rect x="823.900" y="965.400" width="14.600" height="112.600"/><rect x="844.500" y="970.700" width="14.600" height="107.300"/><rect x="865.100" y="972.800" width="14.600" height="105.200"/><rect x="885.700" y="969.600" width="14.600" height="108.400"/><rect x="906.300" y="985.400" width="14.600" height="92.600"/><rect x="926.800" y="963.300" width="14.600" height="114.700"/><rect x="947.400" y="1013.800" width="14.600" height="64.200"/><rect x="968" y="963.300" width="14.600" height="114.700"/><rect x="988.600" y="972.800" width="14.600" height="105.200"/><rect x="1009.200" y="941.200" width="14.600" height="136.800"/><rect x="1029.800" y="1003.300" width="14.600" height="74.700"/><rect x="1050.400" y="983.300" width="14.600" height="94.700"/><rect x="1071" y="962.300" width="14.600" height="115.700"/><rect x="1091.600" y="945.400" width="14.600" height="132.600"/><rect x="1112.200" y="1001.200" width="14.600" height="76.800"/><rect x="1132.700" y="995.900" width="14.600" height="82.100"/><rect x="1153.300" y="938.100" width="14.600" height="139.900"/><rect x="1173.900" y="983.300" width="14.600" height="94.700"/>
</g>
<text class="w" transform="translate(611.900,840.800) rotate(-90)">2350</text><text class="w" transform="translate(632.500,941.800) rotate(-90)">1390</text><text class="w" transform="translate(653.100,984.900) rotate(-90)">980</text><text class="w" transform="translate(673.700,990.200) rotate(-90)">930</text><text class="w" transform="translate(694.300,976.500) rotate(-90)">1060</text><text class="w" transform="translate(714.900,988.100) rotate(-90)">950</text><text class="w" transform="translate(735.400,949.100) rotate(-90)">1320</text><text class="w" transform="translate(756,1003.800) rotate(-90)">800</text><text class="w" transform="translate(776.600,952.300) rotate(-90)">1290</text><text class="w" transform="translate(797.200,1027) rotate(-90)">580</text><text class="w" transform="translate(817.800,982.800) rotate(-90)">1000</text><text class="w" transform="translate(838.400,975.400) rotate(-90)">1070</text><text class="w" transform="translate(859,980.700) rotate(-90)">1020</text><text class="w" transform="translate(879.600,982.800) rotate(-90)">1000</text><text class="w" transform="translate(900.200,979.600) rotate(-90)">1030</text><text class="w" transform="translate(920.800,995.400) rotate(-90)">880</text><text class="w" transform="translate(941.300,973.300) rotate(-90)">1090</text><text class="w" transform="translate(961.900,1023.800) rotate(-90)">610</text><text class="w" transform="translate(982.500,973.300) rotate(-90)">1090</text><text class="w" transform="translate(1003.100,982.800) rotate(-90)">1000</text><text class="w" transform="translate(1023.700,951.200) rotate(-90)">1300</text><text class="w" transform="translate(1044.300,1013.300) rotate(-90)">710</text><text class="w" transform="translate(1064.900,993.300) rotate(-90)">900</text><text class="w" transform="translate(1085.500,972.300) rotate(-90)">1100</text><text class="w" transform="translate(1106.100,955.400) rotate(-90)">1260</text><text class="w" transform="translate(1126.700,1011.200) rotate(-90)">730</text><text class="w" transform="translate(1147.200,1005.900) rotate(-90)">780</text><text class="w" transform="translate(1167.800,948.100) rotate(-90)">1330</text><text class="w" transform="translate(1188.400,993.300) rotate(-90)">900</text>
<text class="w" style="font-size:10px" transform="translate(1206,1091) rotate(-90)">0</text>
<text class="w" style="font-size:10px" transform="translate(1226,1092.500) rotate(-90)">0</text>
<g fill="#000"><rect x="538" y="802" width="39" height="24"/><rect x="538" y="854.500" width="39" height="24"/><rect x="538" y="907.500" width="39" height="23"/><rect x="538" y="960" width="39" height="23"/><rect x="547.400" y="1012.500" width="29.600" height="23.500"/><rect x="567" y="1065" width="10" height="23.600"/></g>
<text class="y3" x="576.500" y="820.500" textLength="38" lengthAdjust="spacingAndGlyphs">2500</text>
<text class="y3" x="576.500" y="873" textLength="38" lengthAdjust="spacingAndGlyphs">2000</text>
<text class="y3" x="576.500" y="925.500" textLength="38" lengthAdjust="spacingAndGlyphs">1500</text>
<text class="y3" x="576.500" y="978" textLength="38" lengthAdjust="spacingAndGlyphs">1000</text>
<text class="y3" x="576.500" y="1030.500" textLength="28.500" lengthAdjust="spacingAndGlyphs">500</text>
<text class="y3" x="576.500" y="1083.500" textLength="9.500" lengthAdjust="spacingAndGlyphs">0</text>
<g fill="#000"><rect x="594" y="1091.500" width="23.700" height="89.200"/><rect x="635.100" y="1091.500" width="23.700" height="89.200"/><rect x="676.100" y="1091.500" width="23.700" height="89.200"/><rect x="717.200" y="1091.500" width="23.700" height="89.200"/><rect x="758.300" y="1091.500" width="23.700" height="89.200"/><rect x="799.400" y="1091.500" width="23.700" height="89.200"/><rect x="840.400" y="1091.500" width="23.700" height="89.200"/><rect x="881.500" y="1091.500" width="23.700" height="89.200"/><rect x="922.600" y="1091.500" width="23.700" height="89.200"/><rect x="963.600" y="1091.500" width="23.700" height="89.200"/><rect x="1004.700" y="1091.500" width="23.700" height="89.200"/><rect x="1045.800" y="1091.500" width="23.700" height="89.200"/><rect x="1086.800" y="1091.500" width="23.700" height="89.200"/><rect x="1127.900" y="1091.500" width="23.700" height="89.200"/><rect x="1169" y="1091.500" width="23.700" height="89.200"/><rect x="1210" y="1091.500" width="23.700" height="89.200"/></g>
<g clip-path="url(#xc3)">
<text class="xd" transform="translate(613.500,1092.500) rotate(-90)" textLength="90" lengthAdjust="spacingAndGlyphs">01-01-2022</text>
<text class="xd" transform="translate(654.600,1092.500) rotate(-90)" textLength="90" lengthAdjust="spacingAndGlyphs">03-01-2022</text>
<text class="xd" transform="translate(695.600,1092.500) rotate(-90)" textLength="90" lengthAdjust="spacingAndGlyphs">05-01-2022</text>
<text class="xd" transform="translate(736.700,1092.500) rotate(-90)" textLength="90" lengthAdjust="spacingAndGlyphs">07-01-2022</text>
<text class="xd" transform="translate(777.800,1092.500) rotate(-90)" textLength="90" lengthAdjust="spacingAndGlyphs">09-01-2022</text>
<text class="xd" transform="translate(818.900,1092.500) rotate(-90)" textLength="90" lengthAdjust="spacingAndGlyphs">11-01-2022</text>
<text class="xd" transform="translate(859.900,1092.500) rotate(-90)" textLength="90" lengthAdjust="spacingAndGlyphs">13-01-2022</text>
<text class="xd" transform="translate(901,1092.500) rotate(-90)" textLength="90" lengthAdjust="spacingAndGlyphs">15-01-2022</text>
<text class="xd" transform="translate(942.100,1092.500) rotate(-90)" textLength="90" lengthAdjust="spacingAndGlyphs">17-01-2022</text>
<text class="xd" transform="translate(983.100,1092.500) rotate(-90)" textLength="90" lengthAdjust="spacingAndGlyphs">19-01-2022</text>
<text class="xd" transform="translate(1024.200,1092.500) rotate(-90)" textLength="90" lengthAdjust="spacingAndGlyphs">21-01-2022</text>
<text class="xd" transform="translate(1065.300,1092.500) rotate(-90)" textLength="90" lengthAdjust="spacingAndGlyphs">23-01-2022</text>
<text class="xd" transform="translate(1106.300,1092.500) rotate(-90)" textLength="90" lengthAdjust="spacingAndGlyphs">25-01-2022</text>
<text class="xd" transform="translate(1147.400,1092.500) rotate(-90)" textLength="90" lengthAdjust="spacingAndGlyphs">27-01-2022</text>
<text class="xd" transform="translate(1188.500,1092.500) rotate(-90)" textLength="90" lengthAdjust="spacingAndGlyphs">29-01-2022</text>
<text class="xd" transform="translate(1229.500,1092.500) rotate(-90)" textLength="90" lengthAdjust="spacingAndGlyphs">31-01-2022</text>
</g>
<rect x="540" y="1196" width="54" height="21" fill="url(#btn)"/>
<text class="bt" x="544" y="1211" textLength="24.500" lengthAdjust="spacingAndGlyphs">Date</text>
<path d="M579.500 1204h9l-4.500 6.500z" fill="#444"/>

<!-- chart 4 -->
<rect x="1263" y="768" width="647" height="462" fill="url(#c3)"/>
<rect x="1909.500" y="652" width="1" height="579" fill="#6c8aa4"/>
<rect x="1275.600" y="778" width="79.400" height="21" fill="url(#btn)"/>
<text class="bt" x="1280" y="793" textLength="67" lengthAdjust="spacingAndGlyphs">Sum of Cost</text>
<rect x="1323.500" y="817" width="568.500" height="282" fill="#deeaf6"/>
<path class="gl" d="M1323.500 848h568.500M1323.500 879h568.500M1323.500 910.700h568.500M1323.500 942.600h568.500M1323.500 974h568.500M1323.500 1005.500h568.500M1323.500 1036h568.500M1323.500 1067.400h568.500"/>
<path d="M1323.500 1099.500h568.500" stroke="#eef2f4" stroke-width="1.500"/>
<g class="b o">
<rect x="1336.800" y="908.400" width="19.500" height="190.600"/><rect x="1384.300" y="1067.800" width="19.500" height="31.200"/><rect x="1431.800" y="1064.600" width="19.500" height="34.400"/><rect x="1479.400" y="1069" width="19.500" height="30"/><rect x="1526.900" y="1053.200" width="19.500" height="45.800"/><rect x="1574.400" y="1067.500" width="19.500" height="31.500"/><rect x="1621.900" y="1063.600" width="19.500" height="35.400"/><rect x="1669.400" y="1017.600" width="19.500" height="81.400"/><rect x="1716.900" y="842.800" width="19.500" height="256.200"/><rect x="1764.400" y="908" width="19.500" height="191"/><rect x="1811.900" y="895.200" width="19.500" height="203.800"/><rect x="1859.400" y="861.100" width="19.500" height="237.900"/>
</g>
<text class="w2" transform="translate(1353.800,918.900) rotate(-90)">30450</text>
<text class="w2" transform="translate(1401.300,1078.300) rotate(-90)">4990</text>
<text class="w2" transform="translate(1448.800,1075.100) rotate(-90)">5500</text>
<text class="w2" transform="translate(1496.400,1079.500) rotate(-90)">4800</text>
<text class="w2" transform="translate(1543.900,1063.700) rotate(-90)">7310</text>
<text class="w2" transform="translate(1591.400,1078) rotate(-90)">5030</text>
<text class="w2" transform="translate(1638.900,1074.100) rotate(-90)">5650</text>
<text class="w2" transform="translate(1686.400,1028.100) rotate(-90)">13010</text>
<text class="w2" transform="translate(1733.900,853.300) rotate(-90)">40920</text>
<text class="w2" transform="translate(1781.400,918.500) rotate(-90)">30520</text>
<text class="w2" transform="translate(1828.900,905.700) rotate(-90)">32560</text>
<text class="w2" transform="translate(1876.400,871.600) rotate(-90)">38000</text>
<g fill="#000"><rect x="1273.500" y="807.400" width="36.500" height="19"/><rect x="1273.500" y="839.600" width="36.500" height="18"/><rect x="1273.500" y="870.400" width="36.500" height="18"/><rect x="1273.500" y="902" width="36.500" height="18"/><rect x="1273.500" y="933.700" width="36.500" height="17"/><rect x="1273.500" y="964" width="36.500" height="18"/><rect x="1273.500" y="995.500" width="36.500" height="18"/><rect x="1273.500" y="1026.700" width="36.500" height="18"/><rect x="1280.800" y="1058" width="29.200" height="18"/><rect x="1302" y="1089.600" width="8" height="17"/></g>
<text class="y2" x="1309.500" y="822" textLength="35" lengthAdjust="spacingAndGlyphs">45000</text>
<text class="y2" x="1309.500" y="853.500" textLength="35" lengthAdjust="spacingAndGlyphs">40000</text>
<text class="y2" x="1309.500" y="884.500" textLength="35" lengthAdjust="spacingAndGlyphs">35000</text>
<text class="y2" x="1309.500" y="916" textLength="35" lengthAdjust="spacingAndGlyphs">30000</text>
<text class="y2" x="1309.500" y="947" textLength="35" lengthAdjust="spacingAndGlyphs">25000</text>
<text class="y2" x="1309.500" y="978" textLength="35" lengthAdjust="spacingAndGlyphs">20000</text>
<text class="y2" x="1309.500" y="1009.500" textLength="35" lengthAdjust="spacingAndGlyphs">15000</text>
<text class="y2" x="1309.500" y="1040.500" textLength="35" lengthAdjust="spacingAndGlyphs">10000</text>
<text class="y2" x="1309.500" y="1072" textLength="28" lengthAdjust="spacingAndGlyphs">5000</text>
<text class="y2" x="1309.500" y="1103" textLength="7" lengthAdjust="spacingAndGlyphs">0</text>
<g fill="#000"><rect x="1338" y="1107.800" width="18" height="67"/><rect x="1386" y="1107.800" width="18" height="69.600"/><rect x="1433" y="1107.800" width="18" height="73.700"/><rect x="1480.300" y="1107.800" width="18" height="69.600"/><rect x="1527.400" y="1107.800" width="18" height="75"/><rect x="1575.200" y="1107.800" width="18" height="68"/><rect x="1622" y="1107.800" width="18" height="64"/><rect x="1670" y="1107.800" width="18" height="71"/><rect x="1717.500" y="1107.800" width="17.500" height="69.600"/><rect x="1765" y="1107.800" width="18" height="76.500"/><rect x="1812" y="1107.800" width="18" height="80"/><rect x="1859.400" y="1107.800" width="18" height="78"/></g>
<text class="xm" transform="translate(1353,1109.300) rotate(-90)" textLength="64" lengthAdjust="spacingAndGlyphs">1. Jan-2022</text>
<text class="xm" transform="translate(1401,1109.300) rotate(-90)" textLength="66.600" lengthAdjust="spacingAndGlyphs">2. Feb-2022</text>
<text class="xm" transform="translate(1448,1109.300) rotate(-90)" textLength="70.700" lengthAdjust="spacingAndGlyphs">3. Mar-2022</text>
<text class="xm" transform="translate(1495.300,1109.300) rotate(-90)" textLength="66.600" lengthAdjust="spacingAndGlyphs">4. Apr-2022</text>
<text class="xm" transform="translate(1542.400,1109.300) rotate(-90)" textLength="72" lengthAdjust="spacingAndGlyphs">5. May-2022</text>
<text class="xm" transform="translate(1590.200,1109.300) rotate(-90)" textLength="65" lengthAdjust="spacingAndGlyphs">6. Jun-2022</text>
<text class="xm" transform="translate(1637,1109.300) rotate(-90)" textLength="61" lengthAdjust="spacingAndGlyphs">7. Jul-2022</text>
<text class="xm" transform="translate(1685,1109.300) rotate(-90)" textLength="68" lengthAdjust="spacingAndGlyphs">8. Aug-2022</text>
<text class="xm" transform="translate(1732,1109.300) rotate(-90)" textLength="66.600" lengthAdjust="spacingAndGlyphs">9. Sep-2022</text>
<text class="xm" transform="translate(1780,1109.300) rotate(-90)" textLength="73.500" lengthAdjust="spacingAndGlyphs">10. Oct-2022</text>
<text class="xm" transform="translate(1827,1109.300) rotate(-90)" textLength="77" lengthAdjust="spacingAndGlyphs">11. Nov-2022</text>
<text class="xm" transform="translate(1874.400,1109.300) rotate(-90)" textLength="75" lengthAdjust="spacingAndGlyphs">12. Dec-2022</text>
<rect x="1276" y="1199" width="62.500" height="20" fill="url(#btn)"/>
<text class="bt" x="1280" y="1214" textLength="33" lengthAdjust="spacingAndGlyphs">Month</text>
<path d="M1323.500 1206h9l-4.500 6.500z" fill="#444"/>
</svg>
</body>
</html>
